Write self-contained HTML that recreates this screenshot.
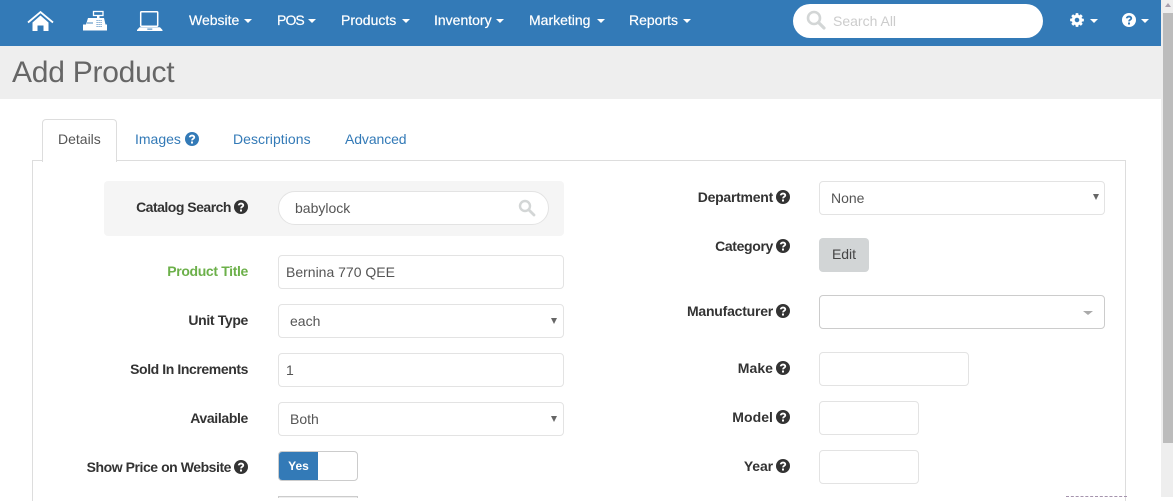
<!DOCTYPE html>
<html lang="en"><head><meta charset="utf-8"><title>Add Product</title>
<style>
html,body{margin:0;padding:0;width:1173px;height:497px;overflow:hidden;background:#fff;font-family:"Liberation Sans",Arial,sans-serif;font-size:14px;color:#333}
.a,.t,.l,.i,svg.s{position:absolute}
.t{white-space:nowrap;line-height:20px}
.nav{color:#fff;top:10px;-webkit-text-stroke:.2px #fff}
.c{position:absolute;width:0;height:0;border-left:4px solid transparent;border-right:4px solid transparent;border-top:4px solid #fff;top:19px}
.l{white-space:nowrap;line-height:20px;font-weight:bold;letter-spacing:-.35px;color:#333;text-align:right}
.ll{left:40px;width:191px}
.lr{left:570px;width:203px}
.i{box-sizing:border-box;background:#fff;border:1px solid #e3e3e3;border-radius:4px;height:34px;color:#555;line-height:32px;white-space:nowrap}
.w{left:278px;width:286px}
.rw{left:819px}
.pad{padding-left:7px}
.sel{padding-left:11px}
.ar{position:absolute;width:0;height:0;border-left:3px solid transparent;border-right:3px solid transparent;border-top:6px solid #666}
.tab{color:#337ab7;top:129px}
</style></head><body>
<div class="a" style="left:0;top:0;width:1161px;height:46px;background:#337ab7"></div>
<div class="a" style="left:0;top:46px;width:1161px;height:53px;background:#eee"></div>

<!-- home -->
<svg class="s" style="left:27px;top:10px" width="27" height="22" viewBox="0 0 27 22"><path d="M1 12.5 13.5 2 26 12.5" fill="none" stroke="#fff" stroke-width="1.8"/><path d="M5.5 12.5 13.5 5.5 21.5 12.5V21H16.5V15.5H10.5V21H5.5Z" fill="#fff"/></svg>
<!-- register -->
<svg class="s" style="left:83px;top:10px" width="25" height="22" viewBox="0 0 25 22"><rect x="10.5" y="1.5" width="9.5" height="4" fill="none" stroke="#fff" stroke-width="1.3"/><rect x="14" y="5.5" width="2.5" height="3" fill="#fff"/><path d="M5 8H21L22.5 14.5H24V20.5H0V14.5H3Z" fill="#fff"/><path d="M13.5 10.5h6M13.5 12.5h6M13.5 14.5h6M13.5 16.5h6" stroke="#337ab7" stroke-width=".8" stroke-dasharray="1.2 .8"/><path d="M4 13h6" stroke="#337ab7" stroke-width=".9"/></svg>
<!-- laptop -->
<svg class="s" style="left:137px;top:10px" width="26" height="22" viewBox="0 0 26 22"><rect x="3.7" y="1.7" width="17" height="14.5" fill="none" stroke="#fff" stroke-width="1.5" rx=".8"/><path d="M0 20 2.5 17.3H23L25.5 20V21H0Z" fill="#fff"/><rect x="10.3" y="18.6" width="5" height="1" fill="#337ab7"/></svg>

<div class="t nav" style="left:189px">Website</div><div class="c" style="left:244px"></div>
<div class="t nav" style="left:277px;letter-spacing:-.9px">POS</div><div class="c" style="left:308px"></div>
<div class="t nav" style="left:341px">Products</div><div class="c" style="left:402px"></div>
<div class="t nav" style="left:434px">Inventory</div><div class="c" style="left:496px"></div>
<div class="t nav" style="left:529px">Marketing</div><div class="c" style="left:597px"></div>
<div class="t nav" style="left:629px">Reports</div><div class="c" style="left:683px"></div>

<!-- global search -->
<div class="a" style="left:793px;top:4px;width:250px;height:34px;border-radius:17px;background:#fff"></div>
<svg class="s" style="left:806px;top:10px" width="20" height="20" viewBox="0 0 20 20"><circle cx="8" cy="8" r="6" fill="none" stroke="#d3d6d6" stroke-width="2.6"/><path d="M12.5 12.5 18 18" stroke="#d3d6d6" stroke-width="3.2" stroke-linecap="round"/></svg>
<div class="t" style="left:833px;top:11px;color:#ccc">Search All</div>

<!-- gear -->
<svg class="s" style="left:1069px;top:12px" width="16" height="16" viewBox="0 0 1792 1792"><path fill="#fff" d="M1152 896q0-106-75-181t-181-75-181 75-75 181 75 181 181 75 181-75 75-181zm512-109v222q0 12-8 23t-20 13l-185 28q-19 54-39 91 35 50 107 138 10 12 10 25t-9 23q-27 37-99 108t-94 71q-12 0-26-9l-138-108q-44 23-91 38-16 136-29 186-7 28-36 28h-222q-14 0-24.5-8.5t-11.5-21.5l-28-184q-49-16-90-37l-141 107q-10 9-25 9-14 0-25-11-126-114-165-168-7-10-7-23 0-12 8-23 15-21 51-66.5t54-70.5q-27-50-41-99l-183-27q-13-2-21-12.5t-8-23.5v-222q0-12 8-23t19-13l186-28q14-46 39-92-40-57-107-138-10-12-10-24 0-10 9-23 26-36 98.5-107.5t94.5-71.5q13 0 26 10l138 107q44-23 91-38 16-136 29-186 7-28 36-28h222q14 0 24.5 8.5t11.5 21.5l28 184q49 16 90 37l142-107q9-9 24-9 13 0 25 10 129 119 165 170 7 8 7 22 0 12-8 23-15 21-51 66.5t-54 70.5q26 50 41 98l183 28q13 2 21 12.5t8 23.5z"/></svg>
<div class="c" style="left:1090px"></div>
<!-- help nav -->
<svg class="s" style="left:1122px;top:13px" width="14" height="14" viewBox="0 0 14 14"><circle cx="7" cy="7" r="7" fill="#fff"/><path d="M4.7 5.3C4.9 3 9.3 3 9.3 5.3 9.3 6.8 7 6.8 7 8.4" fill="none" stroke="#337ab7" stroke-width="1.8"/><rect x="6" y="9.5" width="2" height="2" fill="#337ab7"/></svg>
<div class="c" style="left:1141px"></div>

<div class="t" style="left:12px;top:55px;font-size:30px;line-height:36px;color:#666;letter-spacing:-.25px">Add Product</div>

<!-- panel & tabs -->
<div class="a" style="left:32px;top:160px;width:1092px;height:340px;border:1px solid #ddd;border-bottom:0"></div>
<div class="a" style="left:42px;top:119px;width:73px;height:42px;background:#fff;border:1px solid #ddd;border-bottom:0;border-radius:4px 4px 0 0"></div>
<div class="t" style="left:58px;top:129px;color:#555">Details</div>
<div class="t tab" style="left:135px">Images</div>
<svg class="s" style="left:185px;top:132px" width="14" height="14" viewBox="0 0 14 14"><circle cx="7" cy="7" r="7" fill="#337ab7"/><path d="M4.7 5.3C4.9 3 9.3 3 9.3 5.3 9.3 6.8 7 6.8 7 8.4" fill="none" stroke="#fff" stroke-width="1.8"/><rect x="6" y="9.5" width="2" height="2" fill="#fff"/></svg>
<div class="t tab" style="left:233px;letter-spacing:.05px">Descriptions</div>
<div class="t tab" style="left:345px;letter-spacing:-.1px">Advanced</div>

<!-- left column -->
<div class="a" style="left:104px;top:181px;width:460px;height:55px;background:#f5f5f5;border-radius:4px"></div>
<div class="l ll" style="top:197px;letter-spacing:-.5px">Catalog Search</div>
<svg class="s" style="left:234px;top:200px" width="14" height="14" viewBox="0 0 14 14"><circle cx="7" cy="7" r="7" fill="#333"/><path d="M4.7 5.3C4.9 3 9.3 3 9.3 5.3 9.3 6.8 7 6.8 7 8.4" fill="none" stroke="#fff" stroke-width="1.8"/><rect x="6" y="9.5" width="2" height="2" fill="#fff"/></svg>
<div class="i" style="left:278px;top:191px;width:271px;border-radius:17px;padding-left:16px">babylock</div>
<svg class="s" style="left:518px;top:199px" width="18" height="18" viewBox="0 0 18 18"><circle cx="7" cy="7" r="5" fill="none" stroke="#d3d6d6" stroke-width="2.4"/><path d="M11 11 16 16" stroke="#d3d6d6" stroke-width="2.8" stroke-linecap="round"/></svg>

<div class="l ll" style="top:261px;left:57px;color:#6cb04a">Product Title</div>
<div class="i w pad" style="top:255px">Bernina 770 QEE</div>

<div class="l ll" style="top:310px;left:57px">Unit Type</div>
<div class="i w sel" style="top:304px">each</div><div class="ar" style="left:551px;top:318px"></div>

<div class="l ll" style="top:359px;left:57px;letter-spacing:-.41px">Sold In Increments</div>
<div class="i w pad" style="top:353px">1</div>

<div class="l ll" style="top:408px;left:57px">Available</div>
<div class="i w sel" style="top:402px">Both</div><div class="ar" style="left:551px;top:416px"></div>

<div class="l ll" style="top:457px;letter-spacing:-.45px">Show Price on Website</div>
<svg class="s" style="left:234px;top:460px" width="14" height="14" viewBox="0 0 14 14"><circle cx="7" cy="7" r="7" fill="#333"/><path d="M4.7 5.3C4.9 3 9.3 3 9.3 5.3 9.3 6.8 7 6.8 7 8.4" fill="none" stroke="#fff" stroke-width="1.8"/><rect x="6" y="9.5" width="2" height="2" fill="#fff"/></svg>
<div class="a" style="left:278px;top:451px;width:78px;height:28px;border:1px solid #ccc;border-radius:4px;background:#fff;overflow:hidden"><div style="width:39px;height:28px;background:#337ab7;color:#fff;font-size:12px;font-weight:bold;line-height:28px;text-align:center">Yes</div></div>
<div class="a" style="left:278px;top:496px;width:78px;height:1px;border:1px solid #ccc;border-bottom:0;background:#eee"></div>

<!-- right column -->
<div class="l lr" style="top:187px;letter-spacing:-.25px">Department</div>
<svg class="s" style="left:776px;top:190px" width="14" height="14" viewBox="0 0 14 14"><circle cx="7" cy="7" r="7" fill="#333"/><path d="M4.7 5.3C4.9 3 9.3 3 9.3 5.3 9.3 6.8 7 6.8 7 8.4" fill="none" stroke="#fff" stroke-width="1.8"/><rect x="6" y="9.5" width="2" height="2" fill="#fff"/></svg>
<div class="i rw sel" style="top:181px;width:286px">None</div><div class="ar" style="left:1093px;top:194px"></div>

<div class="l lr" style="top:236px">Category</div>
<svg class="s" style="left:776px;top:239px" width="14" height="14" viewBox="0 0 14 14"><circle cx="7" cy="7" r="7" fill="#333"/><path d="M4.7 5.3C4.9 3 9.3 3 9.3 5.3 9.3 6.8 7 6.8 7 8.4" fill="none" stroke="#fff" stroke-width="1.8"/><rect x="6" y="9.5" width="2" height="2" fill="#fff"/></svg>
<div class="a" style="left:819px;top:238px;width:50px;height:34px;background:#d2d5d6;border-radius:4px;color:#444;line-height:33px;text-align:center">Edit</div>

<div class="l lr" style="top:301px;letter-spacing:-.22px">Manufacturer</div>
<svg class="s" style="left:776px;top:304px" width="14" height="14" viewBox="0 0 14 14"><circle cx="7" cy="7" r="7" fill="#333"/><path d="M4.7 5.3C4.9 3 9.3 3 9.3 5.3 9.3 6.8 7 6.8 7 8.4" fill="none" stroke="#fff" stroke-width="1.8"/><rect x="6" y="9.5" width="2" height="2" fill="#fff"/></svg>
<div class="i rw" style="top:295px;width:286px;border-color:#ccc"></div><div class="a" style="left:1083px;top:311px;width:0;height:0;border-left:5px solid transparent;border-right:5px solid transparent;border-top:4px solid #aaa"></div>

<div class="l lr" style="top:358px;letter-spacing:.05px">Make</div>
<svg class="s" style="left:776px;top:361px" width="14" height="14" viewBox="0 0 14 14"><circle cx="7" cy="7" r="7" fill="#333"/><path d="M4.7 5.3C4.9 3 9.3 3 9.3 5.3 9.3 6.8 7 6.8 7 8.4" fill="none" stroke="#fff" stroke-width="1.8"/><rect x="6" y="9.5" width="2" height="2" fill="#fff"/></svg>
<div class="i rw" style="top:352px;width:150px"></div>

<div class="l lr" style="top:407px;letter-spacing:.05px">Model</div>
<svg class="s" style="left:776px;top:410px" width="14" height="14" viewBox="0 0 14 14"><circle cx="7" cy="7" r="7" fill="#333"/><path d="M4.7 5.3C4.9 3 9.3 3 9.3 5.3 9.3 6.8 7 6.8 7 8.4" fill="none" stroke="#fff" stroke-width="1.8"/><rect x="6" y="9.5" width="2" height="2" fill="#fff"/></svg>
<div class="i rw" style="top:401px;width:100px"></div>

<div class="l lr" style="top:456px;letter-spacing:-.1px">Year</div>
<svg class="s" style="left:776px;top:459px" width="14" height="14" viewBox="0 0 14 14"><circle cx="7" cy="7" r="7" fill="#333"/><path d="M4.7 5.3C4.9 3 9.3 3 9.3 5.3 9.3 6.8 7 6.8 7 8.4" fill="none" stroke="#fff" stroke-width="1.8"/><rect x="6" y="9.5" width="2" height="2" fill="#fff"/></svg>
<div class="i rw" style="top:450px;width:100px"></div>

<div class="a" style="left:1066px;top:496px;width:61px;height:0;border-top:1px dashed #a593ad"></div>

<!-- scrollbar -->
<div class="a" style="left:1161px;top:0;width:12px;height:497px;background:#eee"></div>
<div class="a" style="left:1163px;top:13px;width:10px;height:430px;background:#bcbcbc"></div>
<div class="a" style="left:1165px;top:3px;width:0;height:0;border-left:3.5px solid transparent;border-right:3.5px solid transparent;border-bottom:4px solid #a9a0ad"></div>
</body></html>
